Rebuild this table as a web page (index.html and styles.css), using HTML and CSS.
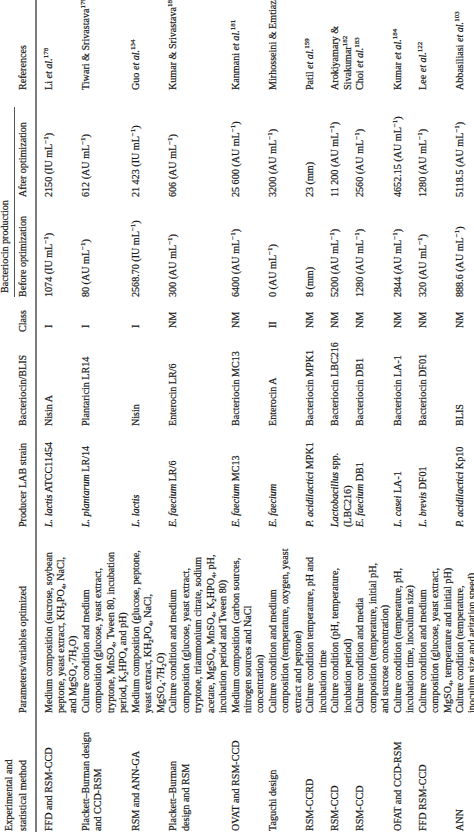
FILE: index.html
```html
<!DOCTYPE html>
<html>
<head>
<meta charset="utf-8">
<link rel="stylesheet" href="styles.css">
</head>
<body>
<div class="page">
<div class="sheet">
  <div class="head">
    <div class="hc">Experimental and<br>statistical method</div>
    <div class="hc">Parameters/variables optimized</div>
    <div class="hc">Producer LAB strain</div>
    <div class="hc">Bacteriocin/BLIS</div>
    <div class="hc">Class</div>
    <div class="grp">Bacteriocin production</div>
    <div class="sub">Before optimization</div>
    <div class="sub">After optimization</div>
    <div class="hc">References</div>
  </div>
  <div class="body">
    <div>FFD and RSM-CCD</div>
    <div>Medium composition (sucrose, soybean<br>peptone, yeast extract, KH<sub>2</sub>PO<sub>4</sub>, NaCl,<br>and MgSO<sub>4</sub>·7H<sub>2</sub>O)</div>
    <div><i>L. lactis</i> ATCC11454</div>
    <div>Nisin A</div>
    <div class="cls">I</div>
    <div>1074 (IU mL<sup>−1</sup>)</div>
    <div>2150 (IU mL<sup>−1</sup>)</div>
    <div>Li <i>et al.</i><sup>178</sup></div>

    <div>Plackett–Burman design<br>and CCD-RSM</div>
    <div>Culture condition and medium<br>composition (glucose, yeast extract,<br>tryptone, MnSO<sub>4</sub>, Tween 80, incubation<br>period, K<sub>2</sub>HPO<sub>4</sub> and pH)</div>
    <div><i>L. plantarum</i> LR/14</div>
    <div>Plantaricin LR14</div>
    <div class="cls">I</div>
    <div>80 (AU mL<sup>−1</sup>)</div>
    <div>612 (AU mL<sup>−1</sup>)</div>
    <div>Tiwari &amp; Srivastava<sup>179</sup></div>

    <div>RSM and ANN-GA</div>
    <div>Medium composition (glucose, peptone,<br>yeast extract, KH<sub>2</sub>PO<sub>4</sub>, NaCl,<br>MgSO<sub>4</sub>·7H<sub>2</sub>O)</div>
    <div><i>L. lactis</i></div>
    <div>Nisin</div>
    <div class="cls">I</div>
    <div>2568.70 (IU mL<sup>−1</sup>)</div>
    <div>21 423 (IU mL<sup>−1</sup>)</div>
    <div>Guo <i>et al.</i><sup>134</sup></div>

    <div>Plackett–Burman<br>design and RSM</div>
    <div>Culture condition and medium<br>composition (glucose, yeast extract,<br>tryptone, triammonium citrate, sodium<br>acetate, MgSO<sub>4</sub>, MnSO<sub>4</sub>, K<sub>2</sub>HPO<sub>4</sub>, pH,<br>incubation period and Tween 80)</div>
    <div><i>E. faecium</i> LR/6</div>
    <div>Enterocin LR/6</div>
    <div class="cls">NM</div>
    <div>300 (AU mL<sup>−1</sup>)</div>
    <div>606 (AU mL<sup>−1</sup>)</div>
    <div>Kumar &amp; Srivastava<sup>180</sup></div>

    <div>OVAT and RSM-CCD</div>
    <div>Medium composition (carbon sources,<br>nitrogen sources and NaCl<br>concentration)</div>
    <div><i>E. faecium</i> MC13</div>
    <div>Bacteriocin MC13</div>
    <div class="cls">NM</div>
    <div>6400 (AU mL<sup>−1</sup>)</div>
    <div>25 600 (AU mL<sup>−1</sup>)</div>
    <div>Kanmani <i>et al.</i><sup>181</sup></div>

    <div>Taguchi design</div>
    <div>Culture condition and medium<br>composition (temperature, oxygen, yeast<br>extract and peptone)</div>
    <div><i>E. faecium</i></div>
    <div>Enterocin A</div>
    <div class="cls">II</div>
    <div>0 (AU mL<sup>−1</sup>)</div>
    <div>3200 (AU mL<sup>−1</sup>)</div>
    <div>Mirhosseini &amp; Emtiazi<sup>47</sup></div>

    <div>RSM-CCRD</div>
    <div>Culture condition temperature, pH and<br>incubation time</div>
    <div><i>P. acidilactici</i> MPK1</div>
    <div>Bacteriocin MPK1</div>
    <div class="cls">NM</div>
    <div>8 (mm)</div>
    <div>23 (mm)</div>
    <div>Patil <i>et al.</i><sup>159</sup></div>

    <div>RSM-CCD</div>
    <div>Culture condition (pH, temperature,<br>incubation period)</div>
    <div><i>Lactobacillus</i> spp.<br>(LBC216)</div>
    <div>Bacteriocin LBC216</div>
    <div class="cls">NM</div>
    <div>5200 (AU mL<sup>−1</sup>)</div>
    <div>11 200 (AU mL<sup>−1</sup>)</div>
    <div>Arokiyamary &amp;<br>Sivakumar<sup>182</sup></div>

    <div>RSM-CCD</div>
    <div>Culture condition and media<br>composition (temperature, initial pH,<br>and sucrose concentration)</div>
    <div><i>E. faecium</i> DB1</div>
    <div>Bacteriocin DB1</div>
    <div class="cls">NM</div>
    <div>1280 (AU mL<sup>−1</sup>)</div>
    <div>2560 (AU mL<sup>−1</sup>)</div>
    <div>Choi <i>et al.</i><sup>183</sup></div>

    <div>OFAT and CCD-RSM</div>
    <div>Culture condition (temperature, pH,<br>incubation time, inoculum size)</div>
    <div><i>L. casei</i> LA-1</div>
    <div>Bacteriocin LA-1</div>
    <div class="cls">NM</div>
    <div>2844 (AU mL<sup>−1</sup>)</div>
    <div>4652.15 (AU mL<sup>−1</sup>)</div>
    <div>Kumar <i>et al.</i><sup>184</sup></div>

    <div>FFD RSM-CCD</div>
    <div>Culture condition and medium<br>composition (glucose, yeast extract,<br>MgSO<sub>4</sub>, temperature and initial pH)</div>
    <div><i>L. brevis</i> DF01</div>
    <div>Bacteriocin DF01</div>
    <div class="cls">NM</div>
    <div>320 (AU mL<sup>−1</sup>)</div>
    <div>1280 (AU mL<sup>−1</sup>)</div>
    <div>Lee <i>et al.</i><sup>122</sup></div>

    <div>ANN</div>
    <div>Culture condition (temperature,<br>inoculum size and agitation speed)</div>
    <div><i>P. acidilactici</i> Kp10</div>
    <div>BLIS</div>
    <div class="cls">NM</div>
    <div>888.6 (AU mL<sup>−1</sup>)</div>
    <div>5118.5 (AU mL<sup>−1</sup>)</div>
    <div>Abbasiliasi <i>et al.</i><sup>103</sup></div>
  </div>
</div>
</div>
</body>
</html>
```

FILE: styles.css
```css
html, body {
  margin: 0;
  padding: 0;
  background: #ffffff;
}

.page {
  width: 474px;
  height: 832px;
  overflow: hidden;
}

.sheet {
  width: 832px;
  height: 474px;
  transform-origin: 0 0;
  transform: translateY(832px) rotate(-90deg);
  font-family: "Liberation Serif", "Times New Roman", serif;
  font-size: 10.1px;
  color: #161616;
  -webkit-text-stroke: 0.2px #161616;
  white-space: nowrap;
}

.head,
.body {
  display: grid;
  grid-template-columns: 118px 186px 101px 94px 35px 100px 107px 130px;
  padding-left: 1px;
  width: 871px;
}

.head {
  grid-template-rows: auto auto;
  line-height: 14.5px;
  padding-bottom: 4px;
  border-bottom: 2px solid #7c7c7c;
}

.hc {
  grid-row: 1 / 3;
  align-self: end;
}

.head .hc:nth-child(1) { grid-column: 1; }
.head .hc:nth-child(2) { grid-column: 2; }
.head .hc:nth-child(3) { grid-column: 3; }
.head .hc:nth-child(4) { grid-column: 4; }
.head .hc:nth-child(5) { grid-column: 5; }
.head .hc:nth-child(9) { grid-column: 8; }

.grp {
  grid-column: 6 / 8;
  grid-row: 1;
  margin-top: -2px;
  margin-right: 17px;
  padding-left: 4px;
  padding-bottom: 1px;
  border-bottom: 1px solid #555;
}

.sub {
  grid-row: 2;
  padding-top: 1.5px;
}

.head .sub:nth-child(7) { grid-column: 6; }
.head .sub:nth-child(8) { grid-column: 7; }

.body {
  line-height: 12.47px;
  padding-top: 6px;
}

.cls {
  padding-left: 4px;
}

sub {
  font-size: 7px;
  vertical-align: -2px;
  line-height: 0;
}

sup {
  font-size: 7px;
  vertical-align: 4px;
  line-height: 0;
}
```
